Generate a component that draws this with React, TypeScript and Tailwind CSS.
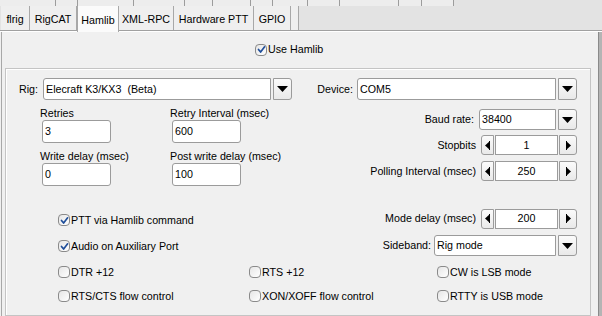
import React from "react";

const bd = "border border-[#9b9b9b]";

function Check({ checked }: { checked?: boolean }) {
  return (
    <span className="w-[12px] h-[12px] rounded-[4px] border border-[#8a8a8a] bg-gradient-to-br from-[#e6e6e6] to-white flex items-center justify-center shrink-0">
      {checked && (
        <svg width="9" height="9" viewBox="0 0 9 9">
          <path d="M1.5 4.5 L3.6 7 L7.6 1.8" stroke="#1f4e9a" strokeWidth="1.7" fill="none" strokeLinecap="round" strokeLinejoin="round" />
        </svg>
      )}
    </span>
  );
}

function CheckLabel({ text, checked }: { text: string; checked?: boolean }) {
  return (
    <div className="flex items-center gap-[1px]">
      <Check checked={checked} />
      <span>{text}</span>
    </div>
  );
}

function DropBtn() {
  return (
    <div className={`w-[19px] ${bd} rounded-r-[3px] bg-gradient-to-b from-[#fbfbfb] to-[#e9e9e9] flex items-center justify-center`}>
      <svg width="11" height="6" viewBox="0 0 11 6">
        <path d="M0 0H11L5.5 6Z" fill="#000" />
      </svg>
    </div>
  );
}

function Combo({ text, w, h }: { text: string; w: string; h: string }) {
  return (
    <div className={`flex gap-[2px] ${w} ${h}`}>
      <div className={`flex-1 bg-white ${bd} rounded-l-[3px] flex items-center pl-[2px] whitespace-pre`}>{text}</div>
      <DropBtn />
    </div>
  );
}

function Spinner({ value }: { value: string }) {
  return (
    <div className="flex gap-[1px] w-[96px] h-[20px]">
      <div className={`w-[13px] ${bd} rounded-l-[3px] bg-gradient-to-b from-[#fbfbfb] to-[#e9e9e9] flex items-center justify-center`}>
        <svg width="5" height="9" viewBox="0 0 5 9">
          <path d="M5 0V9L0 4.5Z" fill="#000" />
          <rect x="4" y="0" width="1" height="9" fill="#000" />
        </svg>
      </div>
      <div className={`flex-1 bg-white ${bd} flex items-center justify-center`}>{value}</div>
      <div className={`w-[18px] ${bd} rounded-r-[3px] bg-gradient-to-b from-[#fbfbfb] to-[#e9e9e9] flex items-center justify-center`}>
        <svg width="5" height="9" viewBox="0 0 5 9">
          <path d="M0 0V9L5 4.5Z" fill="#000" />
          <rect x="0" y="0" width="1" height="9" fill="#000" />
        </svg>
      </div>
    </div>
  );
}

function Field({ label, value }: { label: string; value: string }) {
  return (
    <div className="flex flex-col w-[140px]">
      <div className="h-[13px] leading-[13px] whitespace-nowrap">{label}</div>
      <div className={`ml-[2px] w-[69px] h-[23px] bg-white ${bd} rounded-[3px] flex items-center pl-[2px]`}>{value}</div>
    </div>
  );
}

const topFrags = [56, 22, 56, 51, 28, 38, 22, 35, 32, 59, 23, 32];

const tabs = [
  { t: "flrig", w: "w-[29px]" },
  { t: "RigCAT", w: "w-[47px]" },
  { t: "Hamlib", w: "w-[42px]", sel: true },
  { t: "XML-RPC", w: "w-[55px]" },
  { t: "Hardware PTT", w: "w-[80px]" },
  { t: "GPIO", w: "w-[37px]" },
  { t: "", w: "w-[8px]" },
];

export default function App() {
  return (
    <div className="w-[602px] h-[316px] overflow-hidden bg-[#f0f0f0] text-[10.7px] text-black font-['Liberation_Sans',Arial,sans-serif] leading-[13px]">
      {/* top partial tab strip */}
      <div className="h-[6px] flex bg-[#e3e3e3]">
        {topFrags.map((w, i) => (
          <div key={i} className="h-full border-r border-[#9c9c9c] bg-[#ededed]" style={{ width: w }} />
        ))}
      </div>
      {/* tab row */}
      <div className="h-[25px] flex items-end bg-[#e3e3e3] pl-[1px] border-b border-[#a0a0a0]">
        {tabs.map((tb, i) => (
          <div
            key={i}
            className={`${tb.w} h-[24px] flex items-center justify-center pt-[3px] border-r border-[#a8a8a8] ${
              tb.sel ? "bg-[#fbfbfb] h-[26px] -mb-[2px] border-l relative z-10" : "bg-[#efefef]"
            }`}
          >
            {tb.t}
          </div>
        ))}
        <div className="flex-1" />
      </div>
      {/* panel */}
      <div className="flex h-[285px] border-t border-white">
        <div className="w-[1px] bg-[#a8a8a8] ml-[1px]" />
        <div className="flex-1 flex flex-col">
          <div className="h-[36px] flex items-start pt-[11px] pl-[253px]">
            <CheckLabel text="Use Hamlib" checked />
          </div>
          <div className="ml-[3px] w-[586px] flex-1 border border-[#c4c4c4] shadow-[inset_1px_1px_0_#ffffff] flex flex-col">
            {/* top section */}
            <div className="flex">
              {/* left column */}
              <div className="w-[294px] flex flex-col">
                <div className="mt-[9px] flex items-center h-[22px]">
                  <div className="w-[32px] text-right">Rig:</div>
                  <div className="ml-[5px]">
                    <Combo text="Elecraft K3/KX3  (Beta)" w="w-[249px]" h="h-[22px]" />
                  </div>
                </div>
                <div className="mt-[7px] ml-[34px] flex">
                  <Field label="Retries" value="3" />
                  <Field label="Retry Interval (msec)" value="600" />
                </div>
                <div className="mt-[7px] ml-[34px] flex">
                  <Field label="Write delay (msec)" value="0" />
                  <Field label="Post write delay (msec)" value="100" />
                </div>
              </div>
              {/* right column */}
              <div className="flex-1 flex flex-col items-end pr-[13px]">
                <div className="mt-[9px] flex items-center gap-[4px]">
                  <span>Device:</span>
                  <Combo text="COM5" w="w-[220px]" h="h-[22px]" />
                </div>
                <div className="mt-[9px] flex items-center gap-[5px]">
                  <span>Baud rate:</span>
                  <Combo text="38400" w="w-[98px]" h="h-[21px]" />
                </div>
                <div className="mt-[5px] flex items-center gap-[5px]">
                  <span>Stopbits</span>
                  <Spinner value="1" />
                </div>
                <div className="mt-[6px] flex items-center gap-[5px]">
                  <span>Polling Interval (msec)</span>
                  <Spinner value="250" />
                </div>
              </div>
            </div>
            {/* bottom section */}
            <div className="mt-[22px] flex items-center h-[21px]">
              <div className="ml-[52px] pt-[3px]">
                <CheckLabel text="PTT via Hamlib command" checked />
              </div>
              <div className="ml-auto mr-[13px] flex items-center gap-[5px]">
                <span>Mode delay (msec)</span>
                <Spinner value="200" />
              </div>
            </div>
            <div className="mt-[6px] flex items-center h-[21px]">
              <div className="ml-[52px] pt-[1px]">
                <CheckLabel text="Audio on Auxiliary Port" checked />
              </div>
              <div className="ml-auto mr-[13px] flex items-center gap-[3px]">
                <span>Sideband:</span>
                <Combo text="Rig mode" w="w-[143px]" h="h-[21px]" />
              </div>
            </div>
            <div className="mt-[6px] h-[20px] flex items-center">
              <div className="ml-[52px] w-[191px]">
                <CheckLabel text="DTR +12" />
              </div>
              <div className="w-[188px]">
                <CheckLabel text="RTS +12" />
              </div>
              <div>
                <CheckLabel text="CW is LSB mode" />
              </div>
            </div>
            <div className="mt-[4px] h-[20px] flex items-center">
              <div className="ml-[52px] w-[191px]">
                <CheckLabel text="RTS/CTS flow control" />
              </div>
              <div className="w-[188px]">
                <CheckLabel text="XON/XOFF flow control" />
              </div>
              <div>
                <CheckLabel text="RTTY is USB mode" />
              </div>
            </div>
          </div>
        </div>
        <div className="w-[8px] flex">
          <div className="w-[4px]" />
          <div className="w-[4px] bg-[#b4b4b4] border-l border-[#8a8a8a]" />
        </div>
      </div>
    </div>
  );
}
